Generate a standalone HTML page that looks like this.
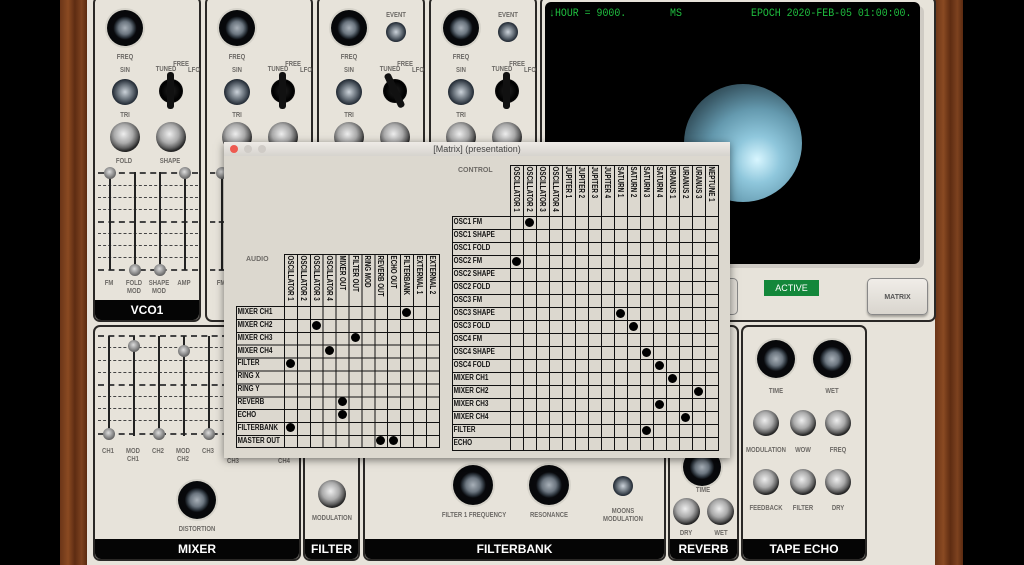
<!DOCTYPE html>
<html><head><meta charset="utf-8"><style>
*{margin:0;padding:0;box-sizing:border-box}
body{width:1024px;height:565px;overflow:hidden;background:#000;position:relative;font-family:"Liberation Sans Narrow","Liberation Sans",sans-serif}
.a{position:absolute}
.wood{background:linear-gradient(90deg,#6b3518,#8a4a22 30%,#5e2c12 55%,#7d421f 80%,#5a2a10)}
.pn{position:absolute;border:2px solid #2a2826;border-radius:7px;background:#e7e3da}
.bar{position:absolute;background:#050505;color:#fff;font-weight:bold;font-size:12px;text-align:center;border-radius:0 0 6px 6px;line-height:20px}
.lb{position:absolute;font-size:7px;color:#6d6a66;font-weight:bold;text-align:center;line-height:8px;transform:translateX(-50%) scaleX(.85);white-space:nowrap}
.bk{position:absolute;border-radius:50%;background:radial-gradient(circle at 50% 50%,#a8b0b8 0,#6c7680 25%,#2a323a 38%,#08090c 46%,#040506 100%);box-shadow:0 0 0 2px rgba(150,150,140,.2)}
.sk{position:absolute;border-radius:50%;background:radial-gradient(circle at 45% 40%,#eeeeee 0,#aaaaaa 38%,#606060 58%,#262626 70%,#1a1a1a 100%)}
.tg{position:absolute;border-radius:50%;background:radial-gradient(circle,#ccd3da 0,#6a737c 40%,#202832 70%,#3a424a 100%)}
.sel{position:absolute;border-radius:50%;background:radial-gradient(circle,#222 0,#000 60%,#333 100%)}
.sl{position:absolute;width:2px;background:#222}
.cap{position:absolute;width:12px;height:12px;border-radius:50%;background:radial-gradient(circle at 45% 40%,#ddd,#777 60%,#333)}
.tick{position:absolute;height:0;border-top:2px dashed #444}
.win{position:absolute;left:224px;top:142px;width:506px;height:316px;background:#dcd8cf;box-shadow:0 2px 8px rgba(0,0,0,.5)}
.tb{position:absolute;left:0;top:0;width:100%;height:14px;background:linear-gradient(#eeebe6,#d6d3ce);font-size:9px;color:#444;text-align:center;line-height:14px;font-family:"Liberation Sans",sans-serif}
.g{position:absolute;border:1px solid #111}
.vh{position:absolute;writing-mode:vertical-rl;font-size:8px;font-weight:bold;color:#111;line-height:12px;padding-top:2px;white-space:nowrap;transform:scaleY(.78);transform-origin:top}
.rl{position:absolute;font-size:8px;font-weight:bold;color:#111;white-space:nowrap;padding-left:2px;transform:scaleX(.8);transform-origin:left}
.d{position:absolute;width:9px;height:9px;border-radius:50%;background:#000}
.gt{position:absolute;color:#1fbf3f;font-size:11px;font-family:"Liberation Mono",monospace;transform:scaleX(.9);transform-origin:left}
</style></head><body>
<div class="a wood" style="left:60px;top:0;width:27px;height:565px"></div>
<div class="a wood" style="left:935px;top:0;width:28px;height:565px"></div>
<div class="a" style="left:87px;top:0;width:848px;height:565px;background:#e7e3da"></div>

<div class="pn" style="left:93px;top:-4px;width:108px;height:326px"></div>
<div class="pn" style="left:205px;top:-4px;width:108px;height:326px"></div>
<div class="pn" style="left:317px;top:-4px;width:108px;height:326px"></div>
<div class="pn" style="left:429px;top:-4px;width:108px;height:326px"></div>
<div class="bar" style="left:95px;top:300px;width:104px">VCO1</div>
<div class="bar" style="left:207px;top:300px;width:104px"></div>

<!-- col1 -->
<div class="bk" style="left:107px;top:10px;width:36px;height:36px"></div>
<div class="lb" style="left:125px;top:54px">FREQ</div>
<div class="lb" style="left:125px;top:67px">SIN</div>
<div class="lb" style="left:166px;top:66px">TUNED</div><div class="lb" style="left:181px;top:61px">FREE</div><div class="lb" style="left:194px;top:67px">LFO</div>
<div class="tg" style="left:112px;top:79px;width:26px;height:26px"></div>
<div class="sel" style="left:159px;top:79px;width:24px;height:24px"></div>
<div class="a" style="left:167px;top:72px;width:7px;height:37px;background:#111;border-radius:3px"></div>
<div class="lb" style="left:125px;top:112px">TRI</div>
<div class="sk" style="left:110px;top:122px;width:30px;height:30px"></div>
<div class="sk" style="left:156px;top:122px;width:30px;height:30px"></div>
<div class="lb" style="left:124px;top:158px">FOLD</div><div class="lb" style="left:170px;top:158px">SHAPE</div>
<div class="tick" style="left:98px;top:172px;width:100px"></div>
<div class="tick" style="left:98px;top:185px;width:100px;border-top-width:1px"></div>
<div class="tick" style="left:98px;top:197px;width:100px;border-top-width:1px"></div>
<div class="tick" style="left:98px;top:209px;width:100px;border-top-width:1px"></div>
<div class="tick" style="left:98px;top:221px;width:100px"></div>
<div class="tick" style="left:98px;top:233px;width:100px;border-top-width:1px"></div>
<div class="tick" style="left:98px;top:245px;width:100px;border-top-width:1px"></div>
<div class="tick" style="left:98px;top:257px;width:100px;border-top-width:1px"></div>
<div class="tick" style="left:98px;top:269px;width:100px"></div>
<div class="sl" style="left:109px;top:172px;height:98px"></div><div class="sl" style="left:134px;top:172px;height:98px"></div><div class="sl" style="left:159px;top:172px;height:98px"></div><div class="sl" style="left:184px;top:172px;height:98px"></div>
<div class="cap" style="left:104px;top:167px"></div><div class="cap" style="left:129px;top:264px"></div><div class="cap" style="left:154px;top:264px"></div><div class="cap" style="left:179px;top:167px"></div>
<div class="lb" style="left:109px;top:280px">FM</div><div class="lb" style="left:134px;top:280px">FOLD<br>MOD</div><div class="lb" style="left:159px;top:280px">SHAPE<br>MOD</div><div class="lb" style="left:184px;top:280px">AMP</div>
<!-- col2 -->
<div class="bk" style="left:219px;top:10px;width:36px;height:36px"></div>
<div class="lb" style="left:237px;top:54px">FREQ</div><div class="lb" style="left:237px;top:67px">SIN</div>
<div class="lb" style="left:278px;top:66px">TUNED</div><div class="lb" style="left:293px;top:61px">FREE</div><div class="lb" style="left:306px;top:67px">LFO</div>
<div class="tg" style="left:224px;top:79px;width:26px;height:26px"></div>
<div class="sel" style="left:271px;top:79px;width:24px;height:24px"></div><div class="a" style="left:279px;top:72px;width:7px;height:37px;background:#111;border-radius:3px"></div>
<div class="lb" style="left:237px;top:112px">TRI</div>
<div class="sk" style="left:222px;top:122px;width:30px;height:30px"></div><div class="sk" style="left:268px;top:122px;width:30px;height:30px"></div>
<div class="tick" style="left:210px;top:172px;width:14px"></div><div class="tick" style="left:210px;top:221px;width:14px"></div><div class="tick" style="left:210px;top:269px;width:14px"></div>
<div class="sl" style="left:221px;top:172px;height:98px"></div><div class="cap" style="left:216px;top:167px"></div><div class="lb" style="left:221px;top:280px">FM</div>
<!-- col3 -->
<div class="bk" style="left:331px;top:10px;width:36px;height:36px"></div>
<div class="lb" style="left:396px;top:12px">EVENT</div><div class="tg" style="left:386px;top:22px;width:20px;height:20px"></div>
<div class="lb" style="left:349px;top:54px">FREQ</div><div class="lb" style="left:349px;top:67px">SIN</div>
<div class="lb" style="left:390px;top:66px">TUNED</div><div class="lb" style="left:405px;top:61px">FREE</div><div class="lb" style="left:418px;top:67px">LFO</div>
<div class="tg" style="left:336px;top:79px;width:26px;height:26px"></div>
<div class="sel" style="left:383px;top:79px;width:24px;height:24px"></div><div class="a" style="left:391px;top:72px;width:7px;height:37px;background:#111;border-radius:3px;transform:rotate(-25deg)"></div>
<div class="lb" style="left:349px;top:112px">TRI</div>
<div class="sk" style="left:334px;top:122px;width:30px;height:30px"></div><div class="sk" style="left:380px;top:122px;width:30px;height:30px"></div>
<!-- col4 -->
<div class="bk" style="left:443px;top:10px;width:36px;height:36px"></div>
<div class="lb" style="left:508px;top:12px">EVENT</div><div class="tg" style="left:498px;top:22px;width:20px;height:20px"></div>
<div class="lb" style="left:461px;top:54px">FREQ</div><div class="lb" style="left:461px;top:67px">SIN</div>
<div class="lb" style="left:502px;top:66px">TUNED</div><div class="lb" style="left:517px;top:61px">FREE</div><div class="lb" style="left:530px;top:67px">LFO</div>
<div class="tg" style="left:448px;top:79px;width:26px;height:26px"></div>
<div class="sel" style="left:495px;top:79px;width:24px;height:24px"></div><div class="a" style="left:503px;top:72px;width:7px;height:37px;background:#111;border-radius:3px"></div>
<div class="lb" style="left:461px;top:112px">TRI</div>
<div class="sk" style="left:446px;top:122px;width:30px;height:30px"></div><div class="sk" style="left:492px;top:122px;width:30px;height:30px"></div>

<!-- screen -->
<div class="pn" style="left:540px;top:-4px;width:396px;height:326px"></div>
<div class="a" style="left:545px;top:2px;width:375px;height:262px;background:#000;border-radius:6px;box-shadow:4px 4px 0 #cfcbc4"></div>
<div class="a" style="left:684px;top:84px;width:118px;height:118px;border-radius:50%;background:radial-gradient(circle at 62% 64%,#d8f6ff 0,#8fc7dc 22%,#6499ae 48%,#3a5a68 72%,#101c22 100%)"></div>
<div class="gt" style="left:549px;top:8px">↓HOUR = 9000.</div>
<div class="gt" style="left:670px;top:8px">MS</div>
<div class="gt" style="left:751px;top:8px">EPOCH 2020-FEB-05 01:00:00.</div>
<div class="a" style="left:764px;top:280px;width:55px;height:16px;background:#13873a;color:#fff;font-size:9px;text-align:center;line-height:16px;font-family:'Liberation Sans',sans-serif">ACTIVE</div>
<div class="a" style="left:867px;top:278px;width:61px;height:37px;border:1px solid #888;border-radius:5px;background:linear-gradient(#f0ede8,#d9d5ce);font-size:7px;font-weight:bold;color:#555;text-align:center;line-height:37px;box-shadow:0 2px 2px rgba(0,0,0,.3)">MATRIX</div>
<div class="a" style="left:725px;top:278px;width:13px;height:37px;border:1px solid #888;border-radius:5px;background:#e0dcd5"></div>

<!-- bottom panels -->
<div class="pn" style="left:93px;top:325px;width:208px;height:236px"></div>
<div class="pn" style="left:303px;top:325px;width:57px;height:236px"></div>
<div class="pn" style="left:363px;top:325px;width:303px;height:236px"></div>
<div class="pn" style="left:668px;top:325px;width:71px;height:236px"></div>
<div class="pn" style="left:741px;top:325px;width:126px;height:236px"></div>
<div class="bar" style="left:95px;top:539px;width:204px">MIXER</div>
<div class="bar" style="left:305px;top:539px;width:53px">FILTER</div>
<div class="bar" style="left:365px;top:539px;width:299px">FILTERBANK</div>
<div class="bar" style="left:670px;top:539px;width:67px">REVERB</div>
<div class="bar" style="left:743px;top:539px;width:122px">TAPE ECHO</div>
<!-- mixer -->
<div class="tick" style="left:98px;top:335px;width:130px"></div><div class="tick" style="left:98px;top:347px;width:130px;border-top-width:1px"></div><div class="tick" style="left:98px;top:360px;width:130px;border-top-width:1px"></div><div class="tick" style="left:98px;top:372px;width:130px;border-top-width:1px"></div><div class="tick" style="left:98px;top:384px;width:130px"></div><div class="tick" style="left:98px;top:396px;width:130px;border-top-width:1px"></div><div class="tick" style="left:98px;top:408px;width:130px;border-top-width:1px"></div><div class="tick" style="left:98px;top:420px;width:130px;border-top-width:1px"></div><div class="tick" style="left:98px;top:433px;width:130px"></div>
<div class="sl" style="left:108px;top:336px;height:100px"></div><div class="sl" style="left:133px;top:336px;height:100px"></div><div class="sl" style="left:158px;top:336px;height:100px"></div><div class="sl" style="left:183px;top:336px;height:100px"></div><div class="sl" style="left:208px;top:336px;height:100px"></div>
<div class="cap" style="left:103px;top:428px"></div><div class="cap" style="left:128px;top:340px"></div><div class="cap" style="left:153px;top:428px"></div><div class="cap" style="left:178px;top:345px"></div><div class="cap" style="left:203px;top:428px"></div>
<div class="lb" style="left:108px;top:448px">CH1</div><div class="lb" style="left:133px;top:448px">MOD<br>CH1</div><div class="lb" style="left:158px;top:448px">CH2</div><div class="lb" style="left:183px;top:448px">MOD<br>CH2</div><div class="lb" style="left:208px;top:448px">CH3</div><div class="lb" style="left:233px;top:458px">CH3</div><div class="lb" style="left:284px;top:458px">CH4</div>
<div class="bk" style="left:178px;top:481px;width:38px;height:38px"></div><div class="lb" style="left:197px;top:526px">DISTORTION</div>
<div class="sk" style="left:318px;top:480px;width:28px;height:28px"></div><div class="lb" style="left:332px;top:515px">MODULATION</div>
<div class="bk" style="left:453px;top:465px;width:40px;height:40px"></div><div class="lb" style="left:474px;top:512px">FILTER 1 FREQUENCY</div>
<div class="bk" style="left:529px;top:465px;width:40px;height:40px"></div><div class="lb" style="left:549px;top:512px">RESONANCE</div>
<div class="tg" style="left:613px;top:476px;width:20px;height:20px"></div><div class="lb" style="left:623px;top:508px">MOONS<br>MODULATION</div>
<div class="bk" style="left:683px;top:448px;width:38px;height:38px"></div><div class="lb" style="left:703px;top:487px">TIME</div>
<div class="sk" style="left:673px;top:498px;width:27px;height:27px"></div><div class="sk" style="left:707px;top:498px;width:27px;height:27px"></div>
<div class="lb" style="left:686px;top:530px">DRY</div><div class="lb" style="left:721px;top:530px">WET</div>
<!-- tape echo -->
<div class="bk" style="left:757px;top:340px;width:38px;height:38px"></div><div class="bk" style="left:813px;top:340px;width:38px;height:38px"></div>
<div class="lb" style="left:776px;top:388px">TIME</div><div class="lb" style="left:832px;top:388px">WET</div>
<div class="sk" style="left:753px;top:410px;width:26px;height:26px"></div><div class="sk" style="left:790px;top:410px;width:26px;height:26px"></div><div class="sk" style="left:825px;top:410px;width:26px;height:26px"></div>
<div class="lb" style="left:766px;top:447px">MODULATION</div><div class="lb" style="left:803px;top:447px">WOW</div><div class="lb" style="left:838px;top:447px">FREQ</div>
<div class="sk" style="left:753px;top:469px;width:26px;height:26px"></div><div class="sk" style="left:790px;top:469px;width:26px;height:26px"></div><div class="sk" style="left:825px;top:469px;width:26px;height:26px"></div>
<div class="lb" style="left:766px;top:505px">FEEDBACK</div><div class="lb" style="left:803px;top:505px">FILTER</div><div class="lb" style="left:838px;top:505px">DRY</div>

<!-- Matrix window -->
<div class="win">
<div class="tb">[Matrix] (presentation)
<span class="a" style="left:6px;top:3px;width:8px;height:8px;border-radius:50%;background:#ee5a50"></span>
<span class="a" style="left:20px;top:3px;width:8px;height:8px;border-radius:50%;background:#cfcbc6"></span>
<span class="a" style="left:34px;top:3px;width:8px;height:8px;border-radius:50%;background:#cfcbc6"></span></div>
<div class="lb" style="left:22px;top:114px;transform:none">AUDIO</div>
<div class="lb" style="left:234px;top:25px;transform:none">CONTROL</div>

<div class="g" style="left:60px;top:112px;width:156px;height:194px;background:repeating-linear-gradient(90deg,transparent 0 11.9px,#111 11.9px 12.9px)"></div>
<div class="g" style="left:12px;top:164px;width:204px;height:142px;background:repeating-linear-gradient(180deg,transparent 0 11.9px,#111 11.9px 12.9px)"></div>
<div class="vh" style="left:60px;top:112px">OSCILLATOR 1</div><div class="vh" style="left:73px;top:112px">OSCILLATOR 2</div><div class="vh" style="left:86px;top:112px">OSCILLATOR 3</div><div class="vh" style="left:99px;top:112px">OSCILLATOR 4</div><div class="vh" style="left:112px;top:112px">MIXER OUT</div><div class="vh" style="left:125px;top:112px">FILTER OUT</div><div class="vh" style="left:137px;top:112px">RING MOD</div><div class="vh" style="left:150px;top:112px">REVERB OUT</div><div class="vh" style="left:163px;top:112px">ECHO OUT</div><div class="vh" style="left:176px;top:112px">FILTERBANK</div><div class="vh" style="left:189px;top:112px">EXTERNAL 1</div><div class="vh" style="left:202px;top:112px">EXTERNAL 2</div>
<div class="rl" style="left:12px;top:165px">MIXER CH1</div><div class="rl" style="left:12px;top:178px">MIXER CH2</div><div class="rl" style="left:12px;top:191px">MIXER CH3</div><div class="rl" style="left:12px;top:204px">MIXER CH4</div><div class="rl" style="left:12px;top:216px">FILTER</div><div class="rl" style="left:12px;top:229px">RING X</div><div class="rl" style="left:12px;top:242px">RING Y</div><div class="rl" style="left:12px;top:255px">REVERB</div><div class="rl" style="left:12px;top:268px">ECHO</div><div class="rl" style="left:12px;top:281px">FILTERBANK</div><div class="rl" style="left:12px;top:294px">MASTER OUT</div>
<div class="d" style="left:178px;top:166px"></div><div class="d" style="left:88px;top:179px"></div><div class="d" style="left:127px;top:191px"></div><div class="d" style="left:101px;top:204px"></div><div class="d" style="left:62px;top:217px"></div><div class="d" style="left:114px;top:255px"></div><div class="d" style="left:114px;top:268px"></div><div class="d" style="left:62px;top:281px"></div><div class="d" style="left:152px;top:294px"></div><div class="d" style="left:165px;top:294px"></div>

<div class="g" style="left:286px;top:23px;width:209px;height:286px;background:repeating-linear-gradient(90deg,transparent 0 12px,#111 12px 13px)"></div>
<div class="g" style="left:228px;top:74px;width:267px;height:235px;background:repeating-linear-gradient(180deg,transparent 0 12px,#111 12px 13px)"></div>
<div class="vh" style="left:286px;top:23px">OSCILLATOR 1</div><div class="vh" style="left:299px;top:23px">OSCILLATOR 2</div><div class="vh" style="left:312px;top:23px">OSCILLATOR 3</div><div class="vh" style="left:325px;top:23px">OSCILLATOR 4</div><div class="vh" style="left:338px;top:23px">JUPITER 1</div><div class="vh" style="left:351px;top:23px">JUPITER 2</div><div class="vh" style="left:364px;top:23px">JUPITER 3</div><div class="vh" style="left:377px;top:23px">JUPITER 4</div><div class="vh" style="left:390px;top:23px">SATURN 1</div><div class="vh" style="left:403px;top:23px">SATURN 2</div><div class="vh" style="left:416px;top:23px">SATURN 3</div><div class="vh" style="left:429px;top:23px">SATURN 4</div><div class="vh" style="left:442px;top:23px">URANUS 1</div><div class="vh" style="left:455px;top:23px">URANUS 2</div><div class="vh" style="left:468px;top:23px">URANUS 3</div><div class="vh" style="left:481px;top:23px">NEPTUNE 1</div>
<div class="rl" style="left:228px;top:75px">OSC1 FM</div><div class="rl" style="left:228px;top:88px">OSC1 SHAPE</div><div class="rl" style="left:228px;top:101px">OSC1 FOLD</div><div class="rl" style="left:228px;top:114px">OSC2 FM</div><div class="rl" style="left:228px;top:127px">OSC2 SHAPE</div><div class="rl" style="left:228px;top:140px">OSC2 FOLD</div><div class="rl" style="left:228px;top:153px">OSC3 FM</div><div class="rl" style="left:228px;top:166px">OSC3 SHAPE</div><div class="rl" style="left:228px;top:179px">OSC3 FOLD</div><div class="rl" style="left:228px;top:192px">OSC4 FM</div><div class="rl" style="left:228px;top:205px">OSC4 SHAPE</div><div class="rl" style="left:228px;top:218px">OSC4 FOLD</div><div class="rl" style="left:228px;top:231px">MIXER CH1</div><div class="rl" style="left:228px;top:244px">MIXER CH2</div><div class="rl" style="left:228px;top:257px">MIXER CH3</div><div class="rl" style="left:228px;top:270px">MIXER CH4</div><div class="rl" style="left:228px;top:283px">FILTER</div><div class="rl" style="left:228px;top:296px">ECHO</div>
<div class="d" style="left:301px;top:76px"></div><div class="d" style="left:288px;top:115px"></div><div class="d" style="left:392px;top:167px"></div><div class="d" style="left:405px;top:180px"></div><div class="d" style="left:418px;top:206px"></div><div class="d" style="left:431px;top:219px"></div><div class="d" style="left:444px;top:232px"></div><div class="d" style="left:470px;top:245px"></div><div class="d" style="left:431px;top:258px"></div><div class="d" style="left:457px;top:271px"></div><div class="d" style="left:418px;top:284px"></div>
</div>
</body></html>
